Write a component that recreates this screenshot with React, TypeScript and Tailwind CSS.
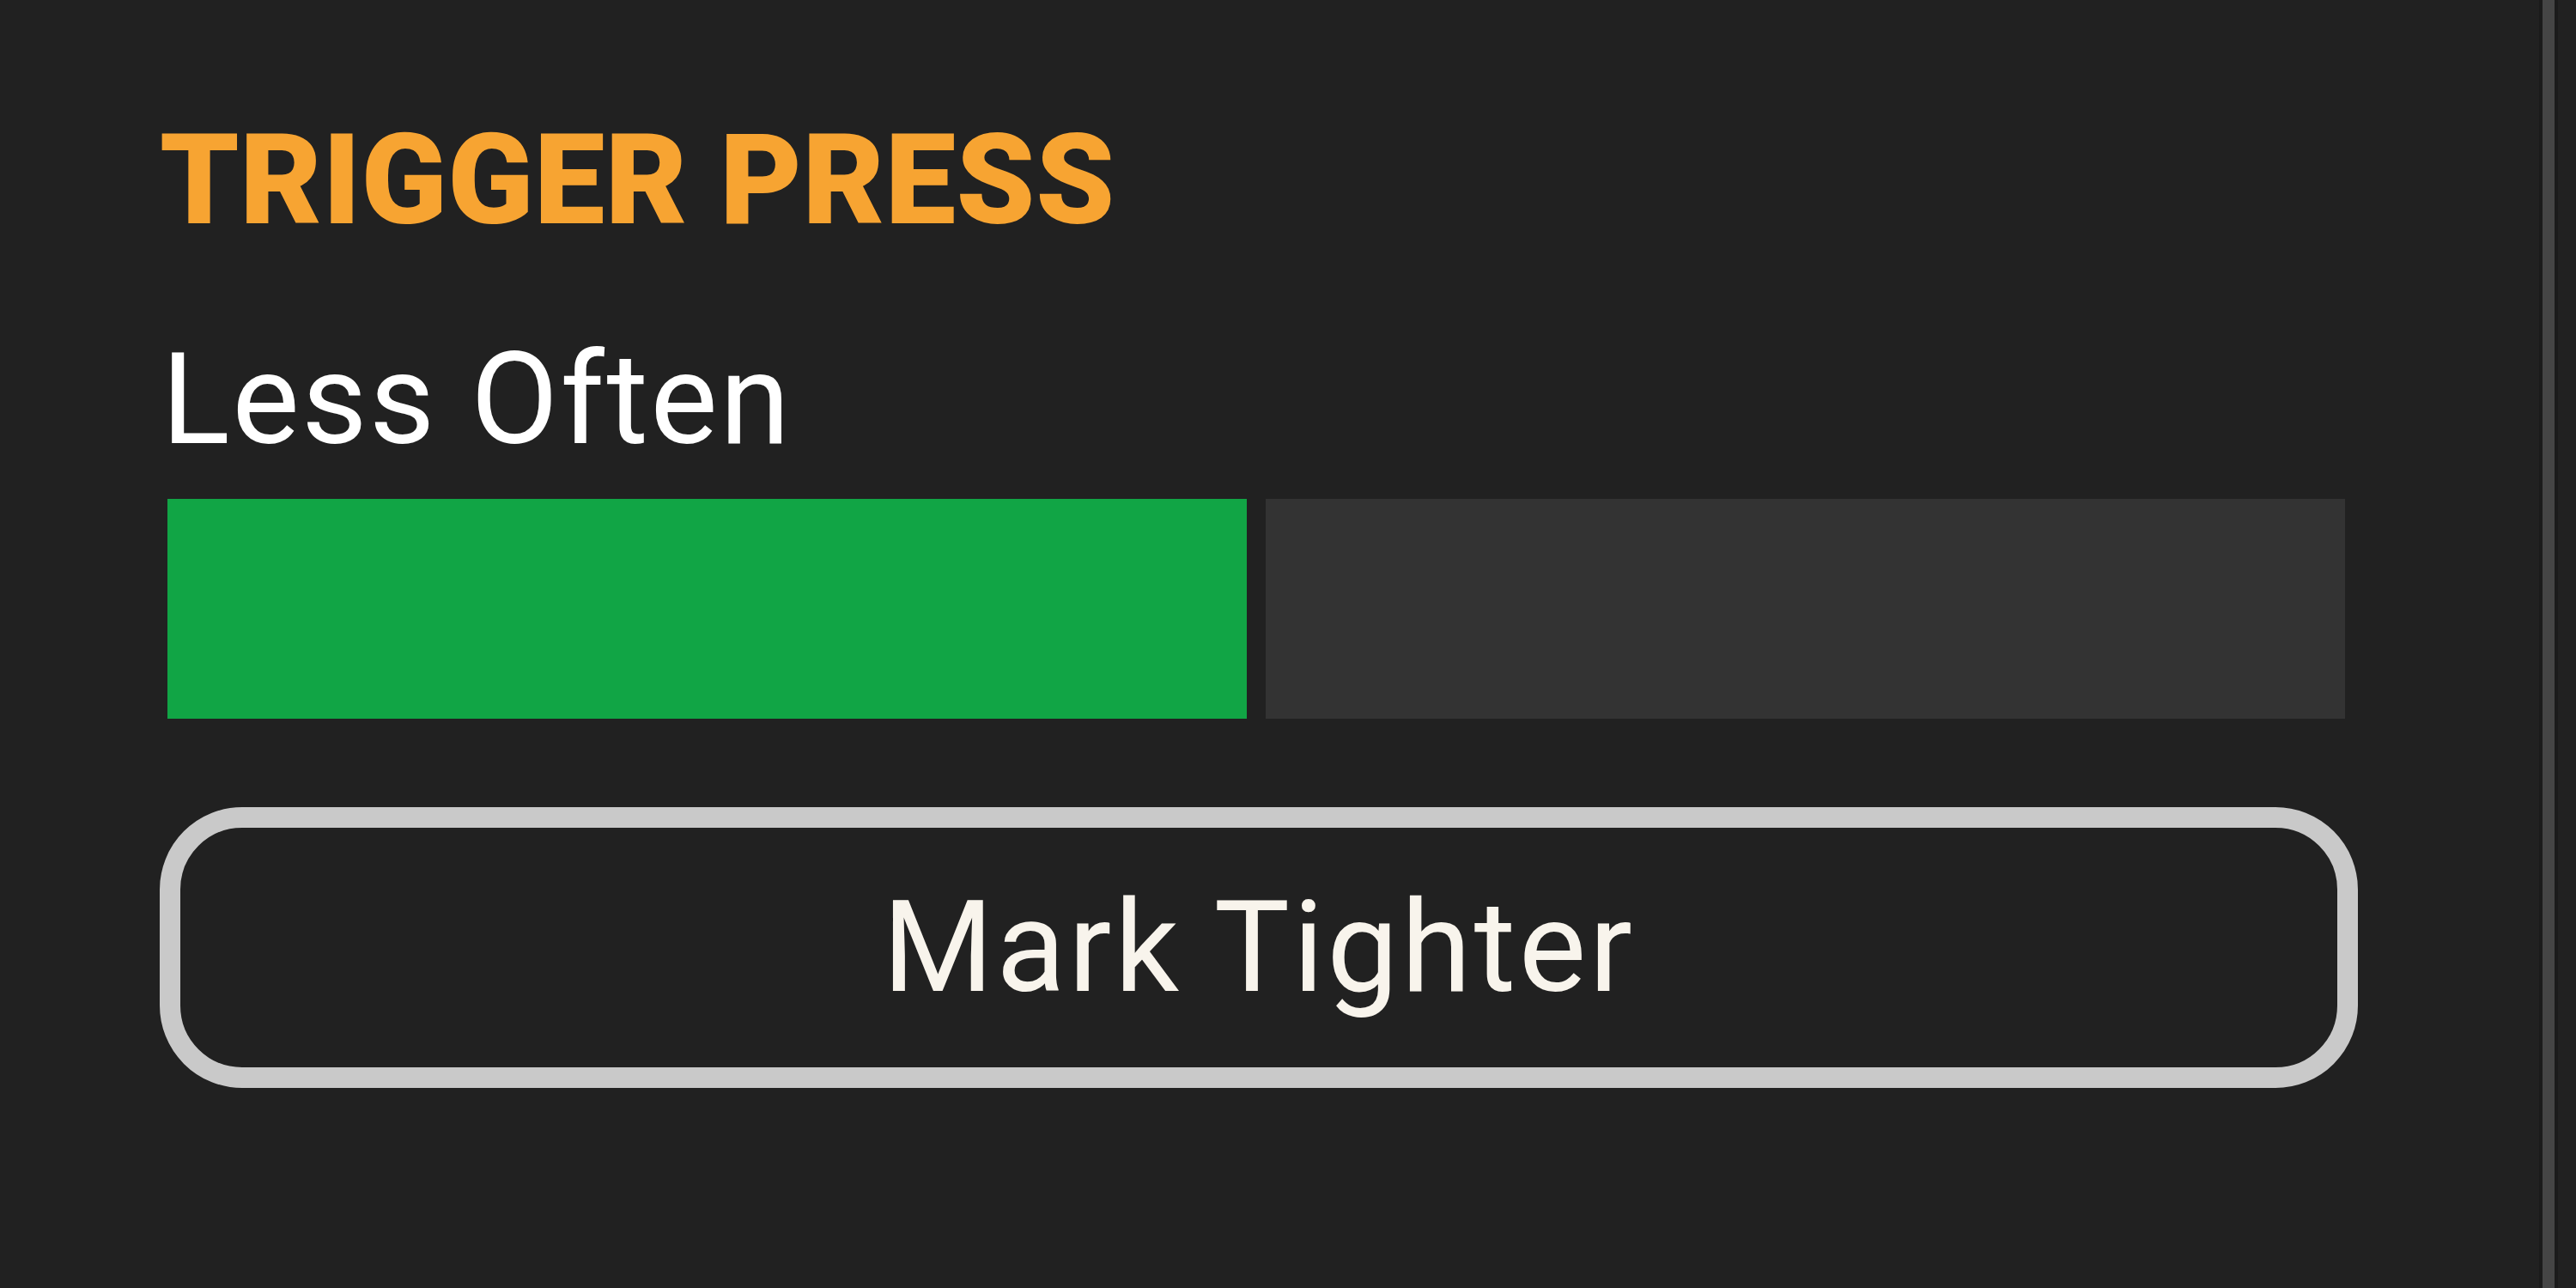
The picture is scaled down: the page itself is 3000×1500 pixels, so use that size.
import React from 'react';

const SEGMENTS = [
    { key: 'left', active: true },
    { key: 'right', active: false },
];

export default function App() {
    return (
        <div className="flex h-[1500px] w-[3000px] bg-[#212121] font-['Roboto',sans-serif]">
            <div className="flex-1 pl-[186px] pr-[211px] pt-[137px]">
                {/* Section title */}
                <h2 className="text-[147px] font-black leading-none tracking-[0.5px] text-[#f7a432]">TRIGGER PRESS</h2>

                {/* Current value */}
                <p className="mt-[108px] pl-[2px] text-[148px] leading-none tracking-[2.5px] text-white">Less Often</p>

                {/* Level bar */}
                <div className="mt-[41px] ml-[9px] mr-[15px] flex h-[256px] gap-[22px]">
                    {SEGMENTS.map(s => (
                        <div
                            key={s.key}
                            className={s.active ? 'flex-1 bg-[#11a545]' : 'flex-1 bg-[#333333]'}
                        />
                    ))}
                </div>

                {/* Action */}
                <button className="mt-[103px] flex h-[327px] w-full items-center justify-center rounded-[96px] border-[24px] border-[#c9c9c9] bg-transparent text-[148px] leading-none tracking-[3.5px] text-[#f8f4ec]">
                    Mark Tighter
                </button>
            </div>

            {/* Divider */}
            <div className="w-[22px] border-x-[4px] border-[#1b1b1b] bg-[#454545]" />
            <div className="w-[21px]" />
        </div>
    );
}
